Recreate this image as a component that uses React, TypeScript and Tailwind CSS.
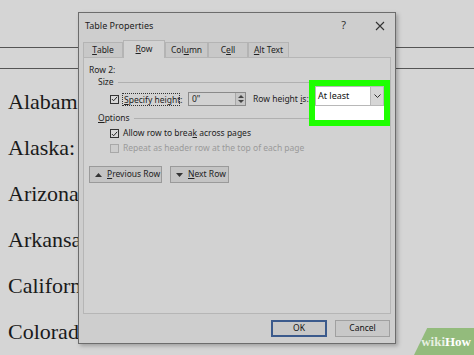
import React from "react";

const states = ["Alabama:", "Alaska:", "Arizona:", "Arkansas:", "California:", "Colorado:"];

const ui = { fontFamily: '"Noto Sans", "Open Sans", sans-serif' };

const U = ({ children }: { children: React.ReactNode }) => <span className="underline underline-offset-1">{children}</span>;

const Check = ({ checked = true, disabled = false }: { checked?: boolean; disabled?: boolean }) => (
  <div
    className={`w-[9px] h-[9px] shrink-0 border flex items-center justify-center ${
      disabled ? "border-[#a8a8a8] bg-[#cdcdcd]" : "border-[#333] bg-[#d8d8d8]"
    }`}
  >
    {checked && (
      <svg width="8" height="8" viewBox="0 0 8 8">
        <path d="M1 4 L3 6 L7 1.5" fill="none" stroke="#222" strokeWidth="1.1" />
      </svg>
    )}
  </div>
);

const Tab = ({ children, active = false }: { children: React.ReactNode; active?: boolean }) => (
  <div
    className={`flex items-center justify-center whitespace-nowrap border border-b-0 border-[#b4b4b4] text-[8.5px] text-[#222] ${
      active ? "h-[18px] bg-[#d2d2d2] w-[42px] relative top-[1px]" : "h-[15px] bg-[#c8c8c8]"
    }`}
  >
    {children}
  </div>
);

const Section = ({ label }: { label: React.ReactNode }) => (
  <div className="flex items-center gap-[4px] pl-[14px] h-[12px]">
    <span className="text-[8.5px] text-[#222] whitespace-nowrap">{label}</span>
    <div className="flex-1 h-px bg-[#b0b0b0] mr-[4px]" />
  </div>
);

export default function App() {
  return (
    <div className="relative w-[474px] h-[355px] overflow-hidden bg-[#d5d5d5]">
      {/* document behind */}
      <div className="pt-[47px]">
        <div className="h-px bg-[#555]" />
        <div className="h-[20px]" />
        <div className="h-px bg-[#555]" />
        <div className="pt-[10px] pl-[8px] text-[22px] leading-[46px] text-[#1a1a1a]" style={{ fontFamily: '"Liberation Serif", serif' }}>
          {states.map((s) => (
            <div key={s}>{s}</div>
          ))}
        </div>
      </div>

      {/* dialog */}
      <div
        className="absolute left-[78px] top-[12px] w-[318px] h-[332px] bg-[#cecece] border border-[#6c6c6c] shadow-[2px_2px_4px_rgba(0,0,0,0.25)] flex flex-col"
        style={ui}
      >
        <div className="h-[25px] flex items-center pl-[6px] pr-[10px]">
          <span className="text-[9px] text-[#222] flex-1">Table Properties</span>
          <span className="text-[11px] text-[#333] mr-[29px]">?</span>
          <svg width="10" height="10" viewBox="0 0 10 10">
            <path d="M1 1 L9 9 M9 1 L1 9" stroke="#333" strokeWidth="1.1" />
          </svg>
        </div>
        <div className="flex items-end pl-[4px] h-[19px]">
          <div className="w-[40px]"><Tab><U>T</U>able</Tab></div>
          <Tab active><U>R</U>ow</Tab>
          <div className="w-[43px]"><Tab>Col<U>u</U>mn</Tab></div>
          <div className="w-[40px]"><Tab>C<U>e</U>ll</Tab></div>
          <div className="w-[41px]"><Tab><U>A</U>lt Text</Tab></div>
        </div>
        <div className="mx-[4px] h-[257px] bg-[#d2d2d2] border border-[#b6b6b6] flex flex-col pt-[6px] text-[#222] text-[8.5px] whitespace-nowrap">
          <div className="pl-[5px] h-[12px] leading-[12px]">Row 2:</div>
          <Section label="Size" />
          <div className="flex items-center h-[20px] mt-[1px] pl-[26px]">
            <Check />
            <div className="ml-[3px] w-[58px] border border-dotted border-[#333] px-[1px] leading-[11px]">
              <U>S</U>pecify height:
            </div>
            <div className="ml-[8px] w-[58px] h-[14px] border border-[#8a8a8a] bg-[#d2d2d2] flex items-center">
              <span className="flex-1 pl-[3px]">0"</span>
              <div className="w-[10px] h-full border-l border-[#a8a8a8] flex flex-col items-center justify-center gap-[2px] bg-[#c6c6c6]">
                <svg width="6" height="3" viewBox="0 0 6 3"><path d="M0 3 L3 0 L6 3Z" fill="#444" /></svg>
                <svg width="6" height="3" viewBox="0 0 6 3"><path d="M0 0 L3 3 L6 0Z" fill="#444" /></svg>
              </div>
            </div>
            <span className="ml-[7px]">Row height <U>i</U>s:</span>
          </div>
          <div className="mt-[3px]">
            <Section label={<><U>O</U>ptions</>} />
          </div>
          <div className="flex items-center gap-[4px] pl-[26px] h-[15px] mt-[2px]">
            <Check />
            <span>Allow row to brea<U>k</U> across pages</span>
          </div>
          <div className="flex items-center gap-[4px] pl-[26px] h-[15px] text-[#9a9a9a]">
            <Check checked={false} disabled />
            <span>Repeat as header row at the top of each page</span>
          </div>
          <div className="flex gap-[8px] pl-[5px] mt-[10px]">
            <div className="w-[73px] h-[17px] bg-[#c4c4c4] border border-[#9a9a9a] flex items-center gap-[5px] pl-[5px]">
              <svg width="7" height="4" viewBox="0 0 7 4"><path d="M0 4 L3.5 0 L7 4Z" fill="#333" /></svg>
              <span><U>P</U>revious Row</span>
            </div>
            <div className="w-[59px] h-[17px] bg-[#c4c4c4] border border-[#9a9a9a] flex items-center gap-[5px] pl-[5px]">
              <svg width="7" height="4" viewBox="0 0 7 4"><path d="M0 0 L3.5 4 L7 0Z" fill="#333" /></svg>
              <span><U>N</U>ext Row</span>
            </div>
          </div>
        </div>
        <div className="flex justify-end gap-[8px] pr-[5px] mt-[6px] text-[8.5px] text-[#111]">
          <div className="w-[56px] h-[17px] border-2 border-[#3b5a8c] bg-[#c8c8c8] flex items-center justify-center">
            OK
          </div>
          <div className="w-[55px] h-[17px] border border-[#a0a0a0] bg-[#c8c8c8] flex items-center justify-center">
            Cancel
          </div>
        </div>
      </div>

      {/* highlight annotation */}
      <div className="absolute left-[309px] top-[80px] w-[81px] h-[46px] border-[6px] border-[#1eff00] bg-white" style={ui}>
        <div className="h-[20px] border border-[#b8b8b8] flex items-center">
          <span className="flex-1 pl-[2px] text-[9px] text-[#111]">At least</span>
          <div className="w-[13px] h-full bg-[#d6d6d6] border-l border-[#b8b8b8] flex items-center justify-center">
            <svg width="7" height="4" viewBox="0 0 7 4"><path d="M0.5 0.5 L3.5 3.5 L6.5 0.5" fill="none" stroke="#333" strokeWidth="1" /></svg>
          </div>
        </div>
      </div>

      {/* wikiHow badge */}
      <div className="absolute right-0 bottom-0 w-[60px] h-[27px] bg-[#93bb7c] [clip-path:polygon(22%_0,100%_0,100%_100%,0_100%)] flex items-center justify-end pr-[3px]">
        <span className="text-[13px] font-bold leading-none" style={{ fontFamily: '"Liberation Serif", serif' }}>
          <span className="text-[#e6efe0]">wiki</span>
          <span className="text-white">How</span>
        </span>
      </div>
    </div>
  );
}
